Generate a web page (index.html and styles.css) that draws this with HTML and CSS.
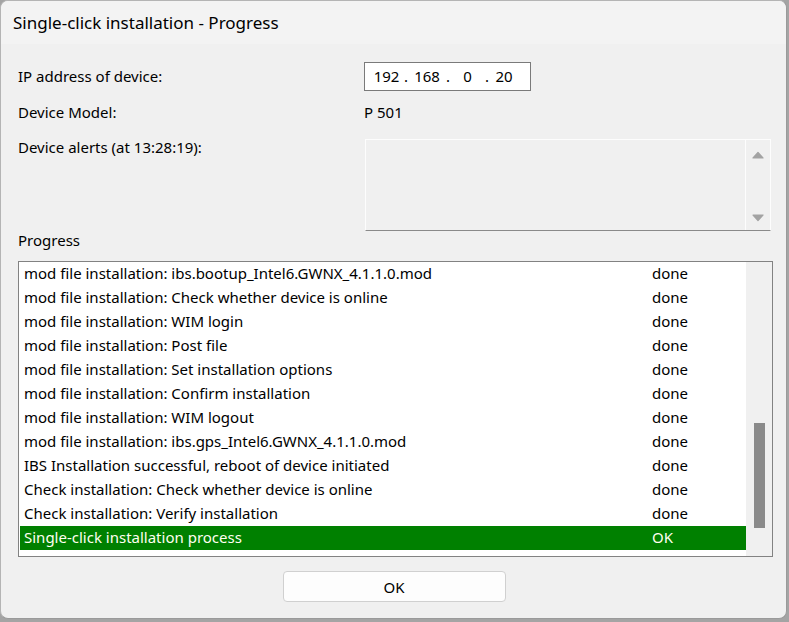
FILE: index.html
```html
<!DOCTYPE html>
<html>
<head>
<meta charset="utf-8">
<link rel="stylesheet" href="styles.css">
</head>
<body>
<div class="window">
  <div class="titlebar">Single-click installation - Progress</div>
  <div class="content">
    <div class="field-row ip-row">
      <div class="label">IP address of device:</div>
      <div class="ipbox"><span class="oct o1">192</span><span class="dot">.</span><span class="oct o2">168</span><span class="dot">.</span><span class="oct o3">0</span><span class="dot">.</span><span class="oct o4">20</span></div>
    </div>
    <div class="field-row model-row">
      <div class="label">Device Model:</div>
      <div class="value">P 501</div>
    </div>
    <div class="field-row alerts-row">
      <div class="label alerts-label">Device alerts (at 13:28:19):</div>
      <div class="alertsbox">
        <div class="alerts-text"></div>
        <div class="vscroll">
          <svg width="12" height="8" viewBox="0 0 12 8"><path d="M1 7 L6 1.5 L11 7 Z" fill="#a3a3a3" stroke="#a3a3a3" stroke-linejoin="round" stroke-width="1.2"/></svg>
          <svg width="12" height="8" viewBox="0 0 12 8"><path d="M1 1 L6 6.5 L11 1 Z" fill="#a3a3a3" stroke="#a3a3a3" stroke-linejoin="round" stroke-width="1.2"/></svg>
        </div>
      </div>
    </div>
    <div class="progress-label">Progress</div>
    <div class="listbox">
      <div class="rows">
        <div class="row"><span class="c1">mod file installation: ibs.bootup_Intel6.GWNX_4.1.1.0.mod</span><span class="c2">done</span></div>
        <div class="row"><span class="c1">mod file installation: Check whether device is online</span><span class="c2">done</span></div>
        <div class="row"><span class="c1">mod file installation: WIM login</span><span class="c2">done</span></div>
        <div class="row"><span class="c1">mod file installation: Post file</span><span class="c2">done</span></div>
        <div class="row"><span class="c1">mod file installation: Set installation options</span><span class="c2">done</span></div>
        <div class="row"><span class="c1">mod file installation: Confirm installation</span><span class="c2">done</span></div>
        <div class="row"><span class="c1">mod file installation: WIM logout</span><span class="c2">done</span></div>
        <div class="row"><span class="c1">mod file installation: ibs.gps_Intel6.GWNX_4.1.1.0.mod</span><span class="c2">done</span></div>
        <div class="row"><span class="c1">IBS Installation successful, reboot of device initiated</span><span class="c2">done</span></div>
        <div class="row"><span class="c1">Check installation: Check whether device is online</span><span class="c2">done</span></div>
        <div class="row"><span class="c1">Check installation: Verify installation</span><span class="c2">done</span></div>
        <div class="row selected"><span class="c1">Single-click installation process</span><span class="c2">OK</span></div>
      </div>
      <div class="listscroll"><div class="thumb"></div></div>
    </div>
    <div class="buttons">
      <button class="okbtn">OK</button>
    </div>
  </div>
</div>
</body>
</html>
```

FILE: styles.css
```css
html, body {
  margin: 0;
  padding: 0;
  background: #a4a4a4;
  width: 789px;
  height: 622px;
  overflow: hidden;
}
body {
  font-family: "Noto Sans", "Open Sans", sans-serif;
  font-size: 15px;
  color: #000;
}
.window {
  box-sizing: border-box;
  width: 787px;
  height: 619px;
  border: 1px solid #b4b4b4;
  border-right-color: #9a9a9a;
  border-bottom-color: #9a9a9a;
  border-radius: 8px;
  background: #f0f0f0;
  overflow: hidden;
  display: flex;
  flex-direction: column;
}
.titlebar {
  height: 43px;
  background: #f3f3f3;
  font-size: 17px;
  line-height: 43px;
  padding-left: 12px;
  color: #000;
}
.content {
  padding: 0 0 0 17px;
  display: flex;
  flex-direction: column;
}
.field-row {
  display: flex;
  align-items: flex-start;
}
.label {
  width: 346px;
}
.ip-row {
  margin-top: 18px;
  height: 28px;
  align-items: center;
}
.ipbox {
  box-sizing: border-box;
  width: 167px;
  height: 29px;
  background: #fff;
  border: 1px solid #7a7a7a;
  display: flex;
  align-items: center;
  padding-left: 8px;
}
.oct { display: inline-block; text-align: center; }
.o1 { width: 27px; }
.o2 { width: 30px; }
.o3 { width: 27px; }
.o4 { width: 22px; }
.dot { display: inline-block; width: 12px; text-align: center; }
.model-row {
  margin-top: 8px;
  height: 28px;
  align-items: center;
}
.alerts-row {
  margin-top: 11px;
}
.alertsbox {
  box-sizing: border-box;
  width: 406px;
  height: 92px;
  margin-top: 2px;
  margin-left: 1px;
  border: 1px solid #fdfdfd;
  border-bottom-color: #8a8a8a;
  display: flex;
}
.alerts-text { flex: 1; }
.vscroll {
  width: 25px;
  border-left: 1px solid #fdfdfd;
  display: flex;
  flex-direction: column;
  justify-content: space-between;
  align-items: center;
  padding: 11px 0 8px;
  box-sizing: border-box;
}
.progress-label {
  margin-top: -2px;
  height: 22px;
  line-height: 22px;
  margin-bottom: 10px;
}
.listbox {
  box-sizing: border-box;
  width: 755px;
  height: 296px;
  border: 1px solid #828282;
  background: #fff;
  display: flex;
  padding: 0 0 0 1px;
}
.rows {
  flex: 1;
  display: flex;
  flex-direction: column;
}
.row {
  height: 24px;
  line-height: 23px;
  display: flex;
  padding-left: 4px;
}
.c1 { width: 628px; }
.row.selected {
  background: #008000;
  color: #fffff0;
}
.listscroll {
  width: 26px;
  background: #f0f0f0;
  display: flex;
  flex-direction: column;
  justify-content: flex-end;
  align-items: center;
  padding-bottom: 28px;
}
.thumb {
  width: 11px;
  height: 105px;
  background: #8a8a8a;
}
.buttons {
  display: flex;
  justify-content: center;
  padding-right: 17px;
  margin-top: 14px;
}
.okbtn {
  box-sizing: border-box;
  width: 223px;
  height: 31px;
  background: #fdfdfd;
  border: 1px solid #d0d0d0;
  border-radius: 4px;
  font-family: "Noto Sans", "Open Sans", sans-serif;
  font-size: 15px;
  color: #000;
  margin-left: 1px;
}
```
